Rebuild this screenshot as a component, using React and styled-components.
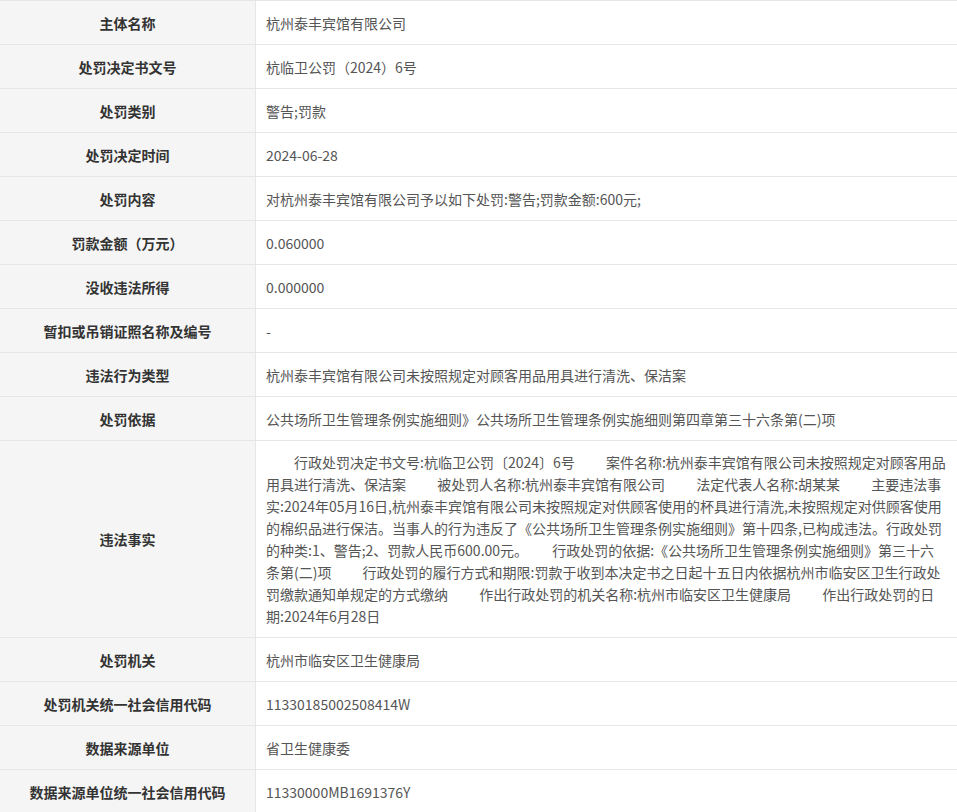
import React from "react";
import styled, { createGlobalStyle } from "styled-components";

const Global = createGlobalStyle`
  html, body { margin: 0; padding: 0; background: #fff; }
  body { font-family: "Noto Sans CJK SC", "Noto Sans", sans-serif; font-size: 14px; }
`;

const Table = styled.div`
  display: grid;
  grid-template-columns: 256px 1fr;
  width: 957px;
  border-top: 1px solid #e6e6e6;
`;

const Label = styled.div`
  background: #f5f5f5;
  color: #333;
  font-weight: 700;
  display: flex;
  align-items: center;
  justify-content: center;
  min-height: 43px;
  border-bottom: 1px solid #e6e6e6;
  border-right: 1px solid #e6e6e6;
  font-size: 14px;
  line-height: 22px;
`;

const Value = styled.div`
  color: #555;
  display: flex;
  align-items: center;
  padding: ${p => (p.$long ? "10px" : "0 10px")};
  min-height: 43px;
  border-bottom: 1px solid #e6e6e6;
  font-size: 14px;
  line-height: 22px;
  white-space: pre-wrap;
  box-sizing: border-box;
`;

const Para = styled.p`
  margin: 0;
  text-indent: 2em;
`;

const S = "\u3000\u3000 ";
const facts =
  "行政处罚决定书文号:杭临卫公罚〔2024〕6号" + S +
  "案件名称:杭州泰丰宾馆有限公司未按照规定对顾客用品用具进行清洗、保洁案" + S +
  "被处罚人名称:杭州泰丰宾馆有限公司" + S +
  "法定代表人名称:胡某某" + S +
  "主要违法事实:2024年05月16日,杭州泰丰宾馆有限公司未按照规定对供顾客使用的杯具进行清洗,未按照规定对供顾客使用的棉织品进行保洁。当事人的行为违反了《公共场所卫生管理条例实施细则》第十四条,已构成违法。行政处罚的种类:1、警告;2、罚款人民币600.00元。" + S +
  "行政处罚的依据:《公共场所卫生管理条例实施细则》第三十六条第(二)项" + S +
  "行政处罚的履行方式和期限:罚款于收到本决定书之日起十五日内依据杭州市临安区卫生行政处罚缴款通知单规定的方式缴纳" + S +
  "作出行政处罚的机关名称:杭州市临安区卫生健康局" + S +
  "作出行政处罚的日期:2024年6月28日";

const rows = [
  ["主体名称", "杭州泰丰宾馆有限公司"],
  ["处罚决定书文号", "杭临卫公罚（2024）6号"],
  ["处罚类别", "警告;罚款"],
  ["处罚决定时间", "2024-06-28"],
  ["处罚内容", "对杭州泰丰宾馆有限公司予以如下处罚:警告;罚款金额:600元;"],
  ["罚款金额（万元）", "0.060000"],
  ["没收违法所得", "0.000000"],
  ["暂扣或吊销证照名称及编号", "-"],
  ["违法行为类型", "杭州泰丰宾馆有限公司未按照规定对顾客用品用具进行清洗、保洁案"],
  ["处罚依据", "公共场所卫生管理条例实施细则》公共场所卫生管理条例实施细则第四章第三十六条第(二)项"],
  ["违法事实", null],
  ["处罚机关", "杭州市临安区卫生健康局"],
  ["处罚机关统一社会信用代码", "11330185002508414W"],
  ["数据来源单位", "省卫生健康委"],
  ["数据来源单位统一社会信用代码", "11330000MB1691376Y"],
];

export default function App() {
  return (
    <>
      <Global />
      <Table>
        {rows.map(([l, v]) => (
          <React.Fragment key={l}>
            <Label>{l}</Label>
            {v === null ? (
              <Value $long><Para>{facts}</Para></Value>
            ) : (
              <Value>{v}</Value>
            )}
          </React.Fragment>
        ))}
      </Table>
    </>
  );
}
